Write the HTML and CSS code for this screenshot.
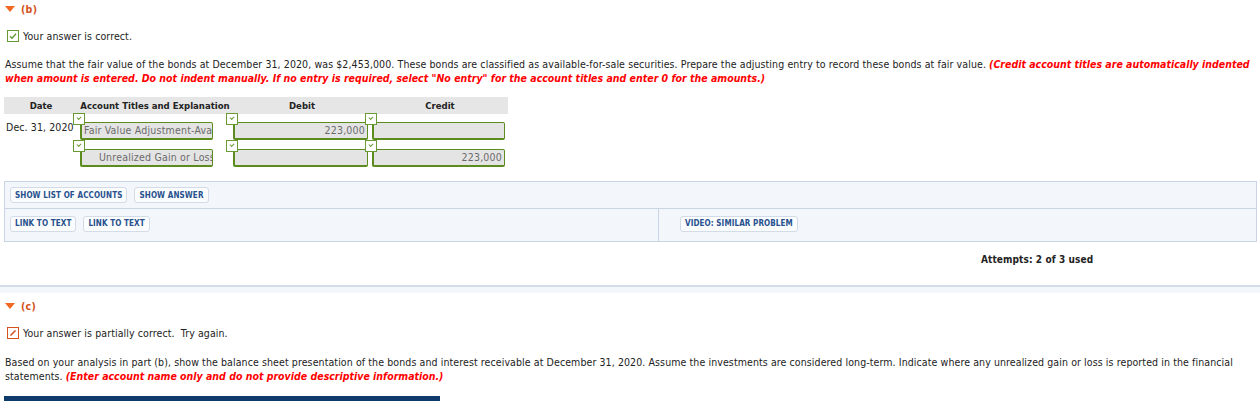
FILE: index.html
```html
<!DOCTYPE html>
<html lang="en">
<head>
    <meta charset="UTF-8">
    <title>Part (b) and (c)</title>
    <link rel="stylesheet" href="styles.css">
</head>
<body>
<div class="part">
    <div class="part-title"><span class="arrow"></span>(b)</div>

    <div class="status">
        <span class="status-icon ok">
            <svg width="10" height="10" viewBox="0 0 10 10"><path d="M2 5.2 L4 7.2 L8 2.8" fill="none" stroke="#5e9a2c" stroke-width="1.3"/></svg>
        </span>
        Your answer is correct.
    </div>

    <p class="question">Assume that the fair value of the bonds at December 31, 2020, was $2,453,000. These bonds are classified as available-for-sale securities. Prepare the adjusting entry to record these bonds at fair value. <em class="note">(Credit account titles are automatically indented when amount is entered. Do not indent manually. If no entry is required, select "No entry" for the account titles and enter 0 for the amounts.)</em></p>

    <div class="journal">
        <div class="jh">Date</div>
        <div class="jh">Account Titles and Explanation</div>
        <div class="jh">Debit</div>
        <div class="jh">Credit</div>

        <div class="jd date">Dec. 31, 2020</div>
        <div class="jd"><div class="field account"><span class="tick"></span><div class="box">Fair Value Adjustment-Ava</div></div></div>
        <div class="jd"><div class="field debit"><span class="tick"></span><div class="box num">223,000</div></div></div>
        <div class="jd"><div class="field credit"><span class="tick"></span><div class="box num"></div></div></div>

        <div class="jd date"></div>
        <div class="jd"><div class="field account"><span class="tick"></span><div class="box indent">Unrealized Gain or Loss</div></div></div>
        <div class="jd"><div class="field debit"><span class="tick"></span><div class="box num"></div></div></div>
        <div class="jd"><div class="field credit"><span class="tick"></span><div class="box num">223,000</div></div></div>
    </div>

    <div class="tools">
        <div class="tools-row first">
            <button class="tool-btn">Show List of Accounts</button>
            <button class="tool-btn">Show Answer</button>
        </div>
        <div class="tools-row second">
            <div class="tools-cell">
                <button class="tool-btn">Link to Text</button>
                <button class="tool-btn">Link to Text</button>
            </div>
            <div class="tools-cell right">
                <button class="tool-btn">Video: Similar Problem</button>
            </div>
        </div>
    </div>

    <div class="attempts">Attempts: 2 of 3 used</div>
</div>

<div class="divider"></div>

<div class="part">
    <div class="part-title"><span class="arrow"></span>(c)</div>

    <div class="status">
        <span class="status-icon partial">
            <svg width="10" height="10" viewBox="0 0 10 10"><path d="M2.5 7.5 L7.5 2.5" fill="none" stroke="#d4531c" stroke-width="1.6"/></svg>
        </span>
        Your answer is partially correct.&nbsp; Try again.
    </div>

    <p class="question">Based on your analysis in part (b), show the balance sheet presentation of the bonds and interest receivable at December 31, 2020. Assume the investments are considered long-term. Indicate where any unrealized gain or loss is reported in the financial statements. <em class="note">(Enter account name only and do not provide descriptive information.)</em></p>

    <div class="progress"><div class="progress-fill"></div></div>
</div>
</body>
</html>
```

FILE: styles.css
```css
body {
    margin: 0;
    font-family: "DejaVu Sans Condensed", "DejaVu Sans", sans-serif;
    font-size: 10.5px;
    letter-spacing: 0.1px;
    color: #222;
    background: #fff;
}

.part {
    padding: 0 3px 0 4px;
}

.part-title {
    display: flex;
    align-items: center;
    gap: 6px;
    height: 18px;
    padding-left: 1px;
    font-weight: bold;
    font-size: 10.5px;
    letter-spacing: 0.3px;
    color: #d4531c;
}

.arrow {
    width: 0;
    height: 0;
    border-left: 5px solid transparent;
    border-right: 5px solid transparent;
    border-top: 6px solid #f26722;
}

.status {
    display: flex;
    align-items: center;
    gap: 4px;
    margin-top: 11px;
    padding-left: 3px;
    height: 14px;
}

.status-icon {
    width: 10px;
    height: 10px;
    border: 1px solid #6a9a33;
    display: flex;
    align-items: center;
    justify-content: center;
    background: #fff;
}

.status-icon.partial {
    border-color: #d4531c;
}

.question {
    margin: 15px 0 0 1px;
    line-height: 13.5px;
}

.note {
    color: #ff0000;
    font-weight: bold;
    letter-spacing: 0;
}

.journal {
    display: grid;
    grid-template-columns: 74px 154px 140px 136px;
    grid-template-rows: 17px 27px 27px;
    margin-top: 12px;
    width: 504px;
}

.jh {
    background: #e6e6e6;
    font-weight: bold;
    font-size: 9.5px;
    letter-spacing: 0;
    display: flex;
    align-items: center;
    justify-content: center;
}

.jd {
    display: flex;
    align-items: flex-end;
    padding-bottom: 1px;
}

.jd.date {
    align-items: flex-start;
    padding: 7px 0 0 2px;
}

.field {
    position: relative;
}

.field.account { margin-left: 2px; width: 133px; }
.field.debit { margin-left: 1px; width: 135px; }
.field.credit { margin-left: 0; width: 133px; }

.box {
    box-sizing: border-box;
    height: 18px;
    line-height: 15px;
    border: 1px solid #5d8c1e;
    border-left-width: 2px;
    border-bottom-width: 2px;
    border-radius: 2px;
    background: #e4e4e4;
    color: #6b6b6b;
    padding: 0 2px;
    white-space: nowrap;
    overflow: hidden;
    letter-spacing: 0.2px;
}

.box.num { text-align: right; }
.box.indent { padding-left: 17px; }

.tick {
    position: absolute;
    left: -7px;
    top: -9px;
    width: 10px;
    height: 10px;
    border: 1px solid #6a9a33;
    background: #fff;
    z-index: 1;
}

.tick::after {
    content: "";
    position: absolute;
    left: 3px;
    top: 2px;
    width: 3px;
    height: 2px;
    border-left: 1px solid #6a9a33;
    border-bottom: 1px solid #6a9a33;
    transform: rotate(-45deg);
}

.tools {
    margin-top: 13px;
    border: 1px solid #c9d5e4;
    background: #f3f6fa;
}

.tools-row {
    display: flex;
}

.tools-row.first {
    gap: 7px;
    height: 26px;
    align-items: center;
    padding-left: 5px;
    border-bottom: 1px solid #c9d5e4;
}

.tools-row.second {
    height: 32px;
}

.tools-cell {
    display: flex;
    align-items: center;
    gap: 7px;
    padding-left: 5px;
    padding-bottom: 3px;
    width: 648px;
}

.tools-cell.right {
    flex: 1;
    border-left: 1px solid #c9d5e4;
    padding-left: 21px;
}

.tool-btn {
    font-family: "DejaVu Sans Condensed", "DejaVu Sans", sans-serif;
    font-size: 8px;
    font-weight: bold;
    letter-spacing: 0.1px;
    text-transform: uppercase;
    color: #27518e;
    background: #fbfcfd;
    border: 1px solid #d3dbe6;
    border-radius: 3px;
    height: 16px;
    padding: 0 4px;
    cursor: pointer;
}

.attempts {
    margin-top: 12px;
    padding-left: 977px;
    font-weight: bold;
    font-size: 10px;
    letter-spacing: 0.1px;
    height: 14px;
}

.divider {
    margin-top: 17px;
    border-top: 2px solid #d3dce8;
    height: 6px;
    background: #f3f6fa;
}

.divider + .part .part-title {
    margin-top: 4px;
}

.divider + .part .question {
    margin-top: 16px;
}

.progress {
    margin-top: 13px;
    height: 5px;
    border-bottom: 1px solid #c9d5e4;
}

.progress-fill {
    width: 436px;
    height: 5px;
    background: #0e3a6c;
}
```
